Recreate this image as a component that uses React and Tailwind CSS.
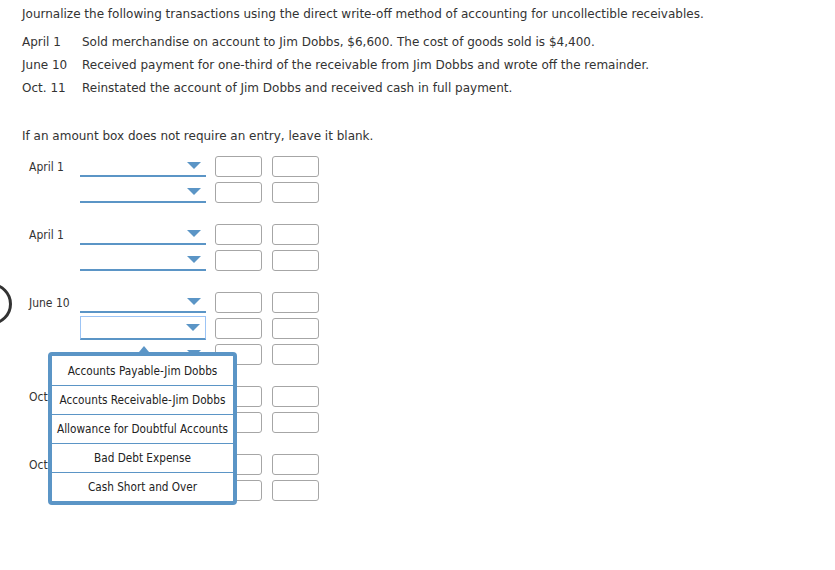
const ARROW = "border-l-[7px] border-r-[7px] border-t-[7px] border-l-transparent border-r-transparent border-t-[#5b95c6]";

const Select = ({ focused }) => (
  <div
    className={
      focused
        ? "w-[126px] h-[24px] -mt-[2px] flex items-center justify-end pr-[5px] border border-[#9cc4f5] border-b-2 border-b-[#5b95c6] bg-white"
        : "w-[126px] h-[21px] flex items-center justify-end pr-[5px] border-b-2 border-[#5b95c6]"
    }
  >
    <span className={ARROW} />
  </div>
);

const Box = () => <div className="w-[47px] h-[21px] border border-[#a6a6a6] rounded-[3px] bg-white" />;

const Row = ({ label, focused }) => (
  <div className="flex items-center h-[21px]">
    <div className="w-[80px] pl-[29px] text-[12px] leading-[16px] font-['DejaVu_Sans_Condensed','Liberation_Sans',sans-serif] text-[#333]">{label}</div>
    <Select focused={focused} />
    <div className="ml-[9px] flex gap-[10px]">
      <Box />
      <Box />
    </div>
  </div>
);

const Group = ({ label, rows, focus }) => (
  <div className="flex flex-col gap-[5px] mt-[21px] first:mt-0">
    {Array.from({ length: rows }).map((_, i) => (
      <Row key={i} label={i === 0 ? label : ""} focused={focus === i} />
    ))}
  </div>
);

const items = [
  "Accounts Payable-Jim Dobbs",
  "Accounts Receivable-Jim Dobbs",
  "Allowance for Doubtful Accounts",
  "Bad Debt Expense",
  "Cash Short and Over",
];

export default function App() {
  return (
    <div className="relative w-[835px] h-[570px] bg-white text-[#333] font-['DejaVu_Sans',sans-serif] overflow-hidden">
      <div className="pl-[22px] pt-[6px] text-[12px] leading-[16px]">
        <p>Journalize the following transactions using the direct write-off method of accounting for uncollectible receivables.</p>
        <div className="mt-[12px] flex flex-col gap-[7px]">
          <div className="flex"><span className="w-[60px]">April 1</span><span>Sold merchandise on account to Jim Dobbs, $6,600. The cost of goods sold is $4,400.</span></div>
          <div className="flex"><span className="w-[60px]">June 10</span><span>Received payment for one-third of the receivable from Jim Dobbs and wrote off the remainder.</span></div>
          <div className="flex"><span className="w-[60px]">Oct. 11</span><span>Reinstated the account of Jim Dobbs and received cash in full payment.</span></div>
        </div>
        <p className="mt-[32px]">If an amount box does not require an entry, leave it blank.</p>
      </div>

      <div className="mt-[12px]">
        <Group label="April 1" rows={2} />
        <Group label="April 1" rows={2} />
        <Group label="June 10" rows={3} focus={1} />
        <Group label="Oct. 11" rows={2} />
        <Group label="Oct. 11" rows={2} />
      </div>

      <div className="absolute left-[-30px] top-[283px] w-[42px] h-[42px] rounded-full border-[3px] border-[#333]" />

      <div className="absolute left-[48px] top-[346px] w-[189px]">
        <div className="ml-[91px] w-0 h-0 border-l-[5px] border-r-[5px] border-b-[6px] border-l-transparent border-r-transparent border-b-[#5b95c6]" />
        <div className="border-4 border-[#5b95c6] rounded-[4px] bg-white font-['DejaVu_Sans_Condensed','Liberation_Sans',sans-serif] text-[11.7px] text-[#222]">
          {items.map((t, i) => (
            <div key={t} className={"h-[29px] pt-[2px] flex items-center justify-center whitespace-nowrap " + (i > 0 ? "border-t border-[#5b95c6]" : "")}>
              {t}
            </div>
          ))}
        </div>
      </div>
    </div>
  );
}
